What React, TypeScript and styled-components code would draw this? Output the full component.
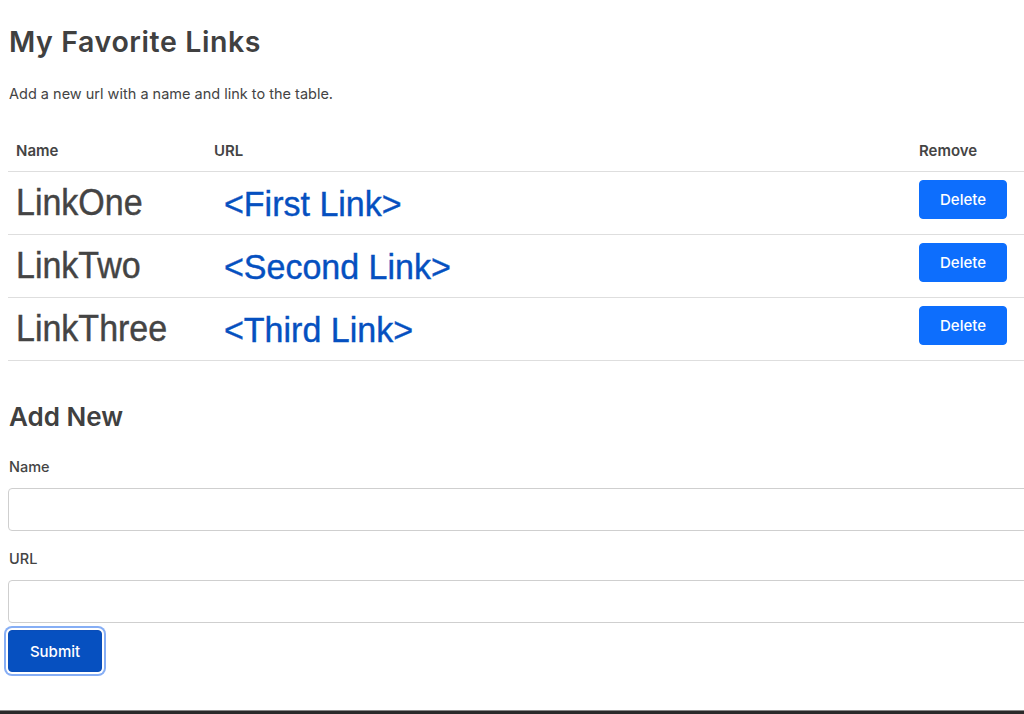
import React from "react";
import styled, { createGlobalStyle } from "styled-components";

const GlobalStyle = createGlobalStyle`
  html, body {
    margin: 0;
    padding: 0;
    overflow: hidden;
    background: #fff;
  }
  body {
    font-family: Inter, "Noto Sans", "Liberation Sans", sans-serif;
    color: #444;
  }
  * {
    box-sizing: border-box;
  }
`;

const links = [
  { name: "LinkOne", url: "<First Link>" },
  { name: "LinkTwo", url: "<Second Link>" },
  { name: "LinkThree", url: "<Third Link>" },
];

const Page = styled.div`
  min-height: 714px;
  display: flex;
  flex-direction: column;
`;

const Main = styled.main`
  flex: 1;
  width: 1048px;
  padding: 0 0 0 8px;
`;

const Title = styled.h1`
  margin: 25px 0 0 1px;
  font-size: 28.5px;
  font-weight: 600;
  line-height: 34px;
  color: #404040;
  letter-spacing: 0.6px;
`;

const Intro = styled.p`
  margin: 24px 0 0 1px;
  font-size: 14.5px;
  line-height: 22px;
  color: #444;
`;

const Table = styled.table`
  width: 100%;
  margin-top: 30px;
  border-collapse: collapse;
`;

const HeadCell = styled.th<{ $width?: number }>`
  width: ${(p) => (p.$width ? `${p.$width}px` : "auto")};
  padding: 5px 8px 10px;
  text-align: left;
  font-size: 15px;
  font-weight: 600;
  line-height: 21px;
  color: #444;
  border-bottom: 1px solid #dedede;
`;

const Row = styled.tr`
  border-bottom: 1px solid #dedede;
`;

const Cell = styled.td`
  padding: 8px;
  vertical-align: top;
`;

const NameText = styled.span`
  display: block;
  font-family: "Liberation Sans", Arial, sans-serif;
  font-size: 34px;
  line-height: 44px;
  color: #444;
  -webkit-text-stroke: 0.4px #444;
  transform: scaleY(1.06);
`;

const LinkText = styled.a`
  display: block;
  margin: 2px 0 0 10px;
  font-family: "Liberation Sans", Arial, sans-serif;
  font-size: 34px;
  line-height: 44px;
  color: #0550c0;
  -webkit-text-stroke: 0.4px #0550c0;
  text-decoration: none;
  transform: scaleY(1.04);
`;

const Button = styled.button<{ $variant?: "primary" | "active" }>`
  font-family: Inter, "Noto Sans", "Liberation Sans", sans-serif;
  font-size: 15px;
  font-weight: 500;
  color: #fff;
  border: 1px solid ${(p) => (p.$variant === "active" ? "#0a4db8" : "#0d6efd")};
  background: ${(p) => (p.$variant === "active" ? "#0650c0" : "#0d6efd")};
  border-radius: 4px;
  cursor: pointer;
`;

const DeleteButton = styled(Button)`
  width: 88px;
  height: 39px;
`;

const SubmitButton = styled(Button)`
  width: 94px;
  height: 42px;
  margin-top: 7px;
  box-shadow: 0 0 0 2px #fff, 0 0 0 4px #86aef5;
`;

const SectionTitle = styled.h2`
  margin: 41px 0 0 1px;
  font-size: 26px;
  font-weight: 600;
  line-height: 30px;
  color: #404040;
`;

const Label = styled.label`
  display: block;
  margin: 25px 0 0 1px;
  font-size: 14.5px;
  font-weight: 500;
  line-height: 20px;
  color: #444;
`;

const Field = styled.div`
  & + & label {
    margin-top: 18px;
  }
`;

const Input = styled.input`
  display: block;
  width: 100%;
  height: 43px;
  margin-top: 11px;
  border: 1px solid #cfcfcf;
  border-radius: 4px;
  font-size: 16px;
  padding: 6px 12px;
  outline: none;
`;

const Footer = styled.footer`
  height: 4px;
  background: #2a2a2a;
  border-top: 1px solid #888;
`;

export default function App() {
  return (
    <Page>
      <GlobalStyle />
      <Main>
        <Title>My Favorite Links</Title>
        <Intro>Add a new url with a name and link to the table.</Intro>
        <Table>
          <thead>
            <tr>
              <HeadCell $width={198}>Name</HeadCell>
              <HeadCell>URL</HeadCell>
              <HeadCell $width={137}>Remove</HeadCell>
            </tr>
          </thead>
          <tbody>
            {links.map((l) => (
              <Row key={l.name}>
                <Cell>
                  <NameText>{l.name}</NameText>
                </Cell>
                <Cell>
                  <LinkText href="#">{l.url}</LinkText>
                </Cell>
                <Cell>
                  <DeleteButton>Delete</DeleteButton>
                </Cell>
              </Row>
            ))}
          </tbody>
        </Table>
        <SectionTitle>Add New</SectionTitle>
        <form onSubmit={(e) => e.preventDefault()}>
          <Field>
            <Label htmlFor="name">Name</Label>
            <Input id="name" type="text" />
          </Field>
          <Field>
            <Label htmlFor="url">URL</Label>
            <Input id="url" type="text" />
          </Field>
          <SubmitButton type="submit" $variant="active">
            Submit
          </SubmitButton>
        </form>
      </Main>
      <Footer />
    </Page>
  );
}
